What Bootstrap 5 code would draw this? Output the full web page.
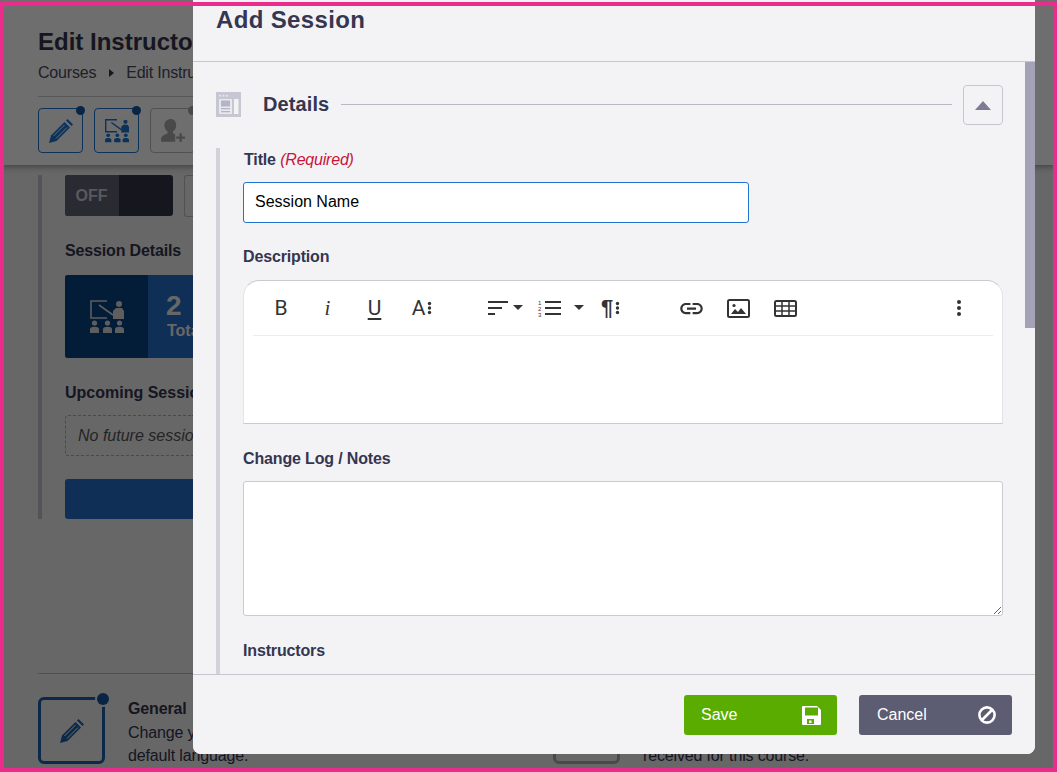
<!DOCTYPE html>
<html lang="en">
<head>
<meta charset="utf-8">
<title>Add Session</title>
<link href="https://cdn.jsdelivr.net/npm/bootstrap@5.3.0/dist/css/bootstrap.min.css" rel="stylesheet">
<style>
html,body{height:772px;overflow:hidden}
body{font-family:"Liberation Sans",Arial,sans-serif;background:#eeeef1;color:#33344c;position:relative;font-size:16px}
.bg-top{background:#fff;height:165px;padding:27px 38px 0;box-shadow:0 2px 6px rgba(0,0,0,.35);position:relative;white-space:nowrap}
.bg-title{font-size:24px;font-weight:700;line-height:30px;margin:0;color:#33344c}
.bg-crumb{line-height:20px;margin-top:6px;color:#4a4a5c;display:flex;align-items:center;gap:12.5px;letter-spacing:-.2px}
.crumb-arrow{flex:none;width:0;height:0;border-left:5px solid #33344c;border-top:4px solid transparent;border-bottom:4px solid transparent}
.bg-rule{border-top:1px solid #c9c9d1;margin-top:13px}
.tool-row{display:flex;gap:11px;margin-top:11px}
.tool-tile{width:45px;height:45px;border:1px solid #1f74d0;border-radius:4px;display:flex;align-items:center;justify-content:center;position:relative;color:#1f74d0}
.tool-tile.off{border-color:#bbb;color:#aaa}
.tool-dot{position:absolute;right:-3px;top:-3px;width:9px;height:9px;border-radius:50%;background:#17569c}
.tool-tile.off .tool-dot{background:#aaa}
.bg-main{padding:10px 0 0 38px;height:508px}
.bg-sect{border-left:4px solid #c3c3cc;height:344px;padding-left:23px;white-space:nowrap}
.bg-toggles{display:flex;gap:11px}
.tog{width:108px;height:41px;border-radius:3px;background:#353548;overflow:hidden;display:flex}
.tog-off{width:54px;background:#626277;color:#cfcfd4;font-weight:700;display:flex;align-items:center;justify-content:center;padding-right:1px}
.tog-other{width:9px;height:42px;border:1px solid #bbb;border-right:0;border-radius:3px 0 0 3px}
.bg-h{font-weight:700;line-height:20px;color:#33344c}
.bg-h-tight{letter-spacing:-.15px}
.stat-tile{height:83px;width:128px;background:#236dca;color:#eee;border-radius:3px 0 0 3px;display:flex;margin-top:14px}
.stat-ico{width:83px;flex:none;background:#094182;display:flex;align-items:center;justify-content:center;border-radius:3px 0 0 3px}
.stat-num{font-size:28px;font-weight:700;line-height:30px;padding:16px 0 0 18px}
.stat-lab{font-weight:700;line-height:18px;padding-left:19px;margin-top:1px}
.empty-note{border:1px dashed #aaa;border-right:0;border-radius:3px 0 0 3px;height:41px;width:128px;margin-top:12px;padding:0 0 0 12px;display:flex;align-items:center;font-style:italic;color:#555}
.bg-bluebtn{height:40px;width:128px;background:#236dca;border-radius:3px 0 0 3px;margin-top:23px}
.bg-foot{margin:0 38px;border-top:1px solid #b9b9c0;padding-top:23px;display:flex}
.foot-item{display:flex;flex:none;width:515px;gap:23px}
.foot-ico{width:67px;height:67px;flex:none;border:3px solid #1f5fa8;border-radius:6px;display:flex;align-items:center;justify-content:center;position:relative;color:#1f5fa8}
.foot-ico.grey{border-color:#aaa}
.foot-dot{position:absolute;right:-7px;top:-7px;width:12px;height:12px;border-radius:50%;background:#17569c;box-shadow:0 0 0 2px #eeeef1}
.foot-txt{line-height:23.5px;color:#33344c;white-space:nowrap;letter-spacing:-.15px}
.foot-skip{height:47px}
.dim{position:absolute;inset:0;background:rgba(0,0,0,.57)}
.frame{position:absolute;inset:2px 0 0 0;border:4px solid #e92d8c;pointer-events:none;z-index:5}
.sess-modal{position:absolute;left:193px;top:0;width:842px;height:754px;background:#f3f3f6;border-radius:0 0 8px 8px;display:flex;flex-direction:column;overflow:hidden}
.sess-head{height:62px;flex:none;border-bottom:1px solid #c6c6ce;padding:5px 23px 0}
.sess-title{font-size:24px;font-weight:700;line-height:30px;margin:0;color:#35364f;letter-spacing:.35px}
.sess-mid{flex:1;min-height:0;display:flex}
.sess-scroll{flex:1;min-width:0;overflow:hidden;padding:23px 22px 0 23px}
.scroll-track{width:10px;flex:none}
.scroll-thumb{height:266px;background:#a3a2b6}
.det-head{display:flex;align-items:center;height:40px}
.det-ico{flex:none;display:block;margin-bottom:1px}
.det-title{font-size:20px;font-weight:700;color:#35364f;margin:0 12px 2px 22px;letter-spacing:.1px}
.det-line{flex:1;border-top:1px solid #b9b9c6;margin-bottom:2px}
.det-btn{flex:none;width:40px;height:40px;margin-left:11px;border:1px solid #c6c6ce;border-radius:4px;background:transparent;padding:0;display:flex;align-items:center;justify-content:center}
.det-up{width:0;height:0;border-left:8px solid transparent;border-right:8px solid transparent;border-bottom:9px solid #7d7c92}
.det-body{margin-top:23px;border-left:4px solid #d2d2da;padding-left:23px}
.fld-label{display:block;font-weight:700;font-size:16px;line-height:20px;margin:0 0 13px;color:#35364f;letter-spacing:-.15px}
.fld-req{font-weight:400;font-style:italic;color:#c8143c;letter-spacing:-.2px}
.fld-title{padding-left:1px;margin-top:1px;margin-bottom:12px;padding-top:2px}
.fld-in.form-control{width:506px;height:41px;border:1px solid #1f74d0;border-radius:3px;font-size:16px;padding:0 11px 2px;color:#000;background:#fff;box-shadow:none}
.fld-desc{margin-top:24px;margin-bottom:13px}
.editor-box{height:144px;background:#fff;border:1px solid #c9c9cf;border-left-color:#e4e4e8;border-right-color:#e4e4e8;border-radius:16px 16px 0 0;padding:0 9px;margin-bottom:25px}
.ed-bar{height:55px;border-bottom:1px solid #ededf0;display:flex;align-items:center;padding-left:4px;color:#333}
.ed-btn{width:47px;height:40px;flex:none;display:flex;align-items:center;justify-content:center;font-size:21px;color:#333;line-height:1;gap:2px}
.ed-b{font-family:Roboto,"Liberation Sans",sans-serif;font-size:21px;padding-left:1px}
.ed-i{font-family:"Liberation Serif",serif;font-style:italic;font-size:21px}
.ed-u{text-decoration:underline;text-underline-offset:3px;font-family:Roboto,sans-serif;font-size:21px}
.ed-para{font-family:"Liberation Sans",sans-serif;font-weight:700;font-size:22px}
.ed-gap{width:37px;flex:none}
.ed-gap2{width:34px;flex:none}
.ed-wide{width:56px;margin-left:4px;margin-right:-2px}
.ed-more{margin-left:auto;margin-right:11px}
.notes-area.form-control{height:135px;border:1px solid #c9c9cf;border-radius:3px;background:#fff;margin-bottom:25px;box-shadow:none}
.inst-in{width:506px;height:30px;background:#fff;border:1px solid #c9c9cf;border-radius:8px 8px 0 0}
.sess-foot{height:80px;flex:none;border-top:1px solid #c6c6ce;background:#f3f3f6;padding:20px 23px 0 0;display:flex;justify-content:flex-end;gap:22px}
.act-btn.btn{width:153px;height:40px;border-radius:3px;border:0;color:#fff;font-size:16px;display:flex;align-items:center;justify-content:space-between;padding:0 16px 0 17px}
.act-save.btn{background:#5aad00}
.act-cancel.btn{background:#5c5c72;padding-left:18px}
</style>
</head>
<body>
<div class="bg-top">
  <h1 class="bg-title">Edit Instructo</h1>
  <div class="bg-crumb"><span>Courses</span><span class="crumb-arrow"></span><span>Edit Instru</span></div>
  <div class="bg-rule"></div>
  <div class="tool-row">
    <div class="tool-tile"><svg width="24" height="24" viewBox="0 0 24 24" fill="currentColor"><path d="M0 24l2-7.500L15.500 3l5.500 5.500L7.500 22z"/><path d="M17 1.500L18.500 0 24 5.500 22.500 7z"/><path d="M4.500 17L15.500 6M7 19.500L18 8.500" stroke="#fff" stroke-width="1"/></svg><span class="tool-dot"></span></div>
    <div class="tool-tile"><svg width="24" height="24" viewBox="0 0 34 34" fill="currentColor"><path d="M17 1H1v17h16" fill="none" stroke="currentColor" stroke-width="2"/><path d="M9 5l14 10" stroke="currentColor" stroke-width="2"/><circle cx="29" cy="4" r="3"/><path d="M23 19v-8l3-3h6l2 3v8z"/><circle cx="4.500" cy="23" r="2.600"/><path d="M0 33v-4c0-3 9-3 9 0v4z"/><circle cx="17.500" cy="23" r="2.600"/><path d="M13 33v-4c0-3 9-3 9 0v4z"/><circle cx="29.500" cy="23" r="2.600"/><path d="M25 33v-4c0-3 9-3 9 0v4z"/></svg><span class="tool-dot"></span></div>
    <div class="tool-tile off"><svg width="26" height="26" viewBox="0 0 24 24" fill="currentColor"><path d="M10 1c3 0 5 2.500 5 5.500 0 2.500-1 4.500-3 6v1.500l2 1V22H1v-3c0-2 2.500-3.500 6-5v-1.500c-2-1.500-3-3.500-3-6C4 3.500 7 1 10 1z"/><path d="M18 14h2.200v3H23v2.200h-2.800V22H18v-2.800h-3V17h3z"/></svg><span class="tool-dot"></span></div>
  </div>
</div>
<div class="bg-main">
  <div class="bg-sect">
    <div class="bg-toggles"><div class="tog"><div class="tog-off">OFF</div></div><div class="tog-other"></div></div>
    <div class="bg-h bg-h-tight" style="margin-top:24px">Session Details</div>
    <div class="stat-tile">
      <div class="stat-ico"><svg width="34" height="34" viewBox="0 0 34 34" fill="#d9d9d9"><path d="M17 1H1v17h16" fill="none" stroke="#d9d9d9" stroke-width="1.600"/><path d="M9 5l14 10" stroke="#d9d9d9" stroke-width="1.600"/><circle cx="29" cy="4" r="3"/><path d="M23 19v-8l3-3h6l2 3v8z"/><circle cx="4.500" cy="23" r="2.600"/><path d="M0 33v-4c0-3 9-3 9 0v4z"/><circle cx="17.500" cy="23" r="2.600"/><path d="M13 33v-4c0-3 9-3 9 0v4z"/><circle cx="29.500" cy="23" r="2.600"/><path d="M25 33v-4c0-3 9-3 9 0v4z"/></svg></div>
      <div><div class="stat-num">2</div><div class="stat-lab">Tota</div></div>
    </div>
    <div class="bg-h" style="margin-top:25px">Upcoming Sessio</div>
    <div class="empty-note">No future sessio</div>
    <div class="bg-bluebtn"></div>
  </div>
</div>
<div class="bg-foot">
  <div class="foot-item">
    <div class="foot-ico"><svg width="24" height="24" viewBox="0 0 24 24" fill="currentColor"><path d="M0 24l2-7.500L15.500 3l5.500 5.500L7.500 22z"/><path d="M17 1.500L18.500 0 24 5.500 22.500 7z"/><path d="M4.500 17L15.500 6M7 19.500L18 8.500" stroke="#fff" stroke-width="1"/></svg><span class="foot-dot"></span></div>
    <div class="foot-txt"><div><strong>General</strong></div><div>Change y</div><div>default language.</div></div>
  </div>
  <div class="foot-item">
    <div class="foot-ico grey"></div>
    <div class="foot-txt"><div class="foot-skip"></div><div>received for this course.</div></div>
  </div>
</div>
<div class="dim"></div>

<div class="sess-modal">
  <div class="sess-head"><h2 class="sess-title">Add Session</h2></div>
  <div class="sess-mid">
    <div class="sess-scroll">
      <div class="det-head">
        <svg class="det-ico" width="25" height="25" viewBox="0 0 25 25"><rect width="25" height="25" fill="#c6c7d3"/><rect x="3" y="3" width="2" height="1.500" fill="#e6e6ec"/><rect x="6.500" y="3" width="2" height="1.500" fill="#e6e6ec"/><rect x="10" y="3" width="2" height="1.500" fill="#e6e6ec"/><rect x="3" y="7" width="13" height="15" fill="#e8e8ee"/><rect x="5" y="8.500" width="9" height="6" fill="#b4b5c4"/><rect x="5" y="16" width="9" height="1.300" fill="#b4b5c4"/><rect x="5" y="19" width="9" height="1.300" fill="#b4b5c4"/><rect x="18" y="7" width="4.500" height="15" fill="#f3f3f6"/></svg>
        <span class="det-title">Details</span>
        <span class="det-line"></span>
        <button type="button" class="det-btn" aria-label="Collapse"><span class="det-up"></span></button>
      </div>
      <div class="det-body">
        <label class="fld-label fld-title">Title <span class="fld-req">(Required)</span></label>
        <input class="form-control fld-in" type="text" value="Session Name">
        <label class="fld-label fld-desc">Description</label>
        <div class="editor-box">
          <div class="ed-bar">
            <span class="ed-btn ed-b">B</span>
            <span class="ed-btn ed-i">i</span>
            <span class="ed-btn ed-u">U</span>
            <span class="ed-btn"><span class="ed-b">A</span><svg width="5" height="14" viewBox="0 0 5 14" fill="#333"><circle cx="2.500" cy="2.500" r="1.700"/><circle cx="2.500" cy="7" r="1.700"/><circle cx="2.500" cy="11.500" r="1.700"/></svg></span>
            <span class="ed-gap"></span>
            <span class="ed-btn"><svg width="36" height="16" viewBox="0 0 36 16" fill="#333"><rect x="0" y="1" width="20" height="2"/><rect x="0" y="7" width="14" height="2"/><rect x="0" y="13" width="7" height="2"/><path d="M25 5h10l-5 5z"/></svg></span>
            <span class="ed-btn ed-wide"><svg width="46" height="18" viewBox="0 0 46 18" fill="#333"><text x="0" y="6" font-size="6" font-family="Liberation Sans">1</text><text x="0" y="12" font-size="6" font-family="Liberation Sans">2</text><text x="0" y="18" font-size="6" font-family="Liberation Sans">3</text><rect x="7" y="2" width="16" height="2"/><rect x="7" y="8" width="16" height="2"/><rect x="7" y="14" width="16" height="2"/><path d="M36 6h10l-5 5z"/></svg></span>
            <span class="ed-btn"><span class="ed-para">¶</span><svg width="5" height="14" viewBox="0 0 5 14" fill="#333"><circle cx="2.500" cy="2.500" r="1.700"/><circle cx="2.500" cy="7" r="1.700"/><circle cx="2.500" cy="11.500" r="1.700"/></svg></span>
            <span class="ed-gap2"></span>
            <span class="ed-btn"><svg width="27" height="27" viewBox="0 0 24 24" fill="#333"><path d="M3.900 12c0-1.710 1.390-3.100 3.100-3.100h4V7H7c-2.760 0-5 2.240-5 5s2.240 5 5 5h4v-1.900H7c-1.710 0-3.100-1.390-3.100-3.100zM8 13h8v-2H8v2zm9-6h-4v1.900h4c1.710 0 3.100 1.390 3.100 3.100s-1.390 3.100-3.100 3.100h-4V17h4c2.760 0 5-2.240 5-5s-2.240-5-5-5z"/></svg></span>
            <span class="ed-btn"><svg width="23" height="19" viewBox="0 0 23 19"><rect x="1" y="1" width="21" height="17" rx="1.500" fill="none" stroke="#333" stroke-width="2"/><circle cx="7" cy="6.500" r="1.600" fill="#333"/><path d="M4 15l4-5 3 3 3-4 5 6z" fill="#333"/></svg></span>
            <span class="ed-btn"><svg width="23" height="17" viewBox="0 0 23 17" fill="none" stroke="#333"><rect x="1" y="1" width="21" height="15" rx="1.500" stroke-width="2"/><path d="M1 6h21M1 11h21M8 1v15M15 1v15" stroke-width="1.500"/></svg></span>
            <span class="ed-btn ed-more"><svg width="4" height="16" viewBox="0 0 4 16" fill="#333"><circle cx="2" cy="2" r="2"/><circle cx="2" cy="8" r="2"/><circle cx="2" cy="14" r="2"/></svg></span>
          </div>
        </div>
        <label class="fld-label" style="margin-bottom:12px">Change Log / Notes</label>
        <textarea class="form-control notes-area"></textarea>
        <label class="fld-label" style="margin-bottom:13px">Instructors</label>
        <div class="inst-in"></div>
      </div>
    </div>
    <div class="scroll-track"><div class="scroll-thumb"></div></div>
  </div>
  <div class="sess-foot">
    <button type="button" class="btn act-btn act-save"><span>Save</span><svg width="19" height="19" viewBox="0 0 19 19"><path d="M1 0h14l4 4v14a1 1 0 0 1-1 1H1a1 1 0 0 1-1-1V1a1 1 0 0 1 1-1z" fill="#fff"/><rect x="3" y="1.500" width="13" height="8" fill="#5aad00"/><rect x="5" y="13" width="7" height="5" fill="#5aad00"/><rect x="7" y="14.500" width="2.500" height="2.500" fill="#fff"/></svg></button>
    <button type="button" class="btn act-btn act-cancel"><span>Cancel</span><svg width="18" height="18" viewBox="0 0 18 18" fill="none" stroke="#fff" stroke-width="2.600"><circle cx="9" cy="9" r="7.600"/><path d="M4 14L14 4"/></svg></button>
  </div>
</div>
<div class="frame"></div>
<script src="https://cdn.jsdelivr.net/npm/bootstrap@5.3.0/dist/js/bootstrap.bundle.min.js"></script>
</body>
</html>
